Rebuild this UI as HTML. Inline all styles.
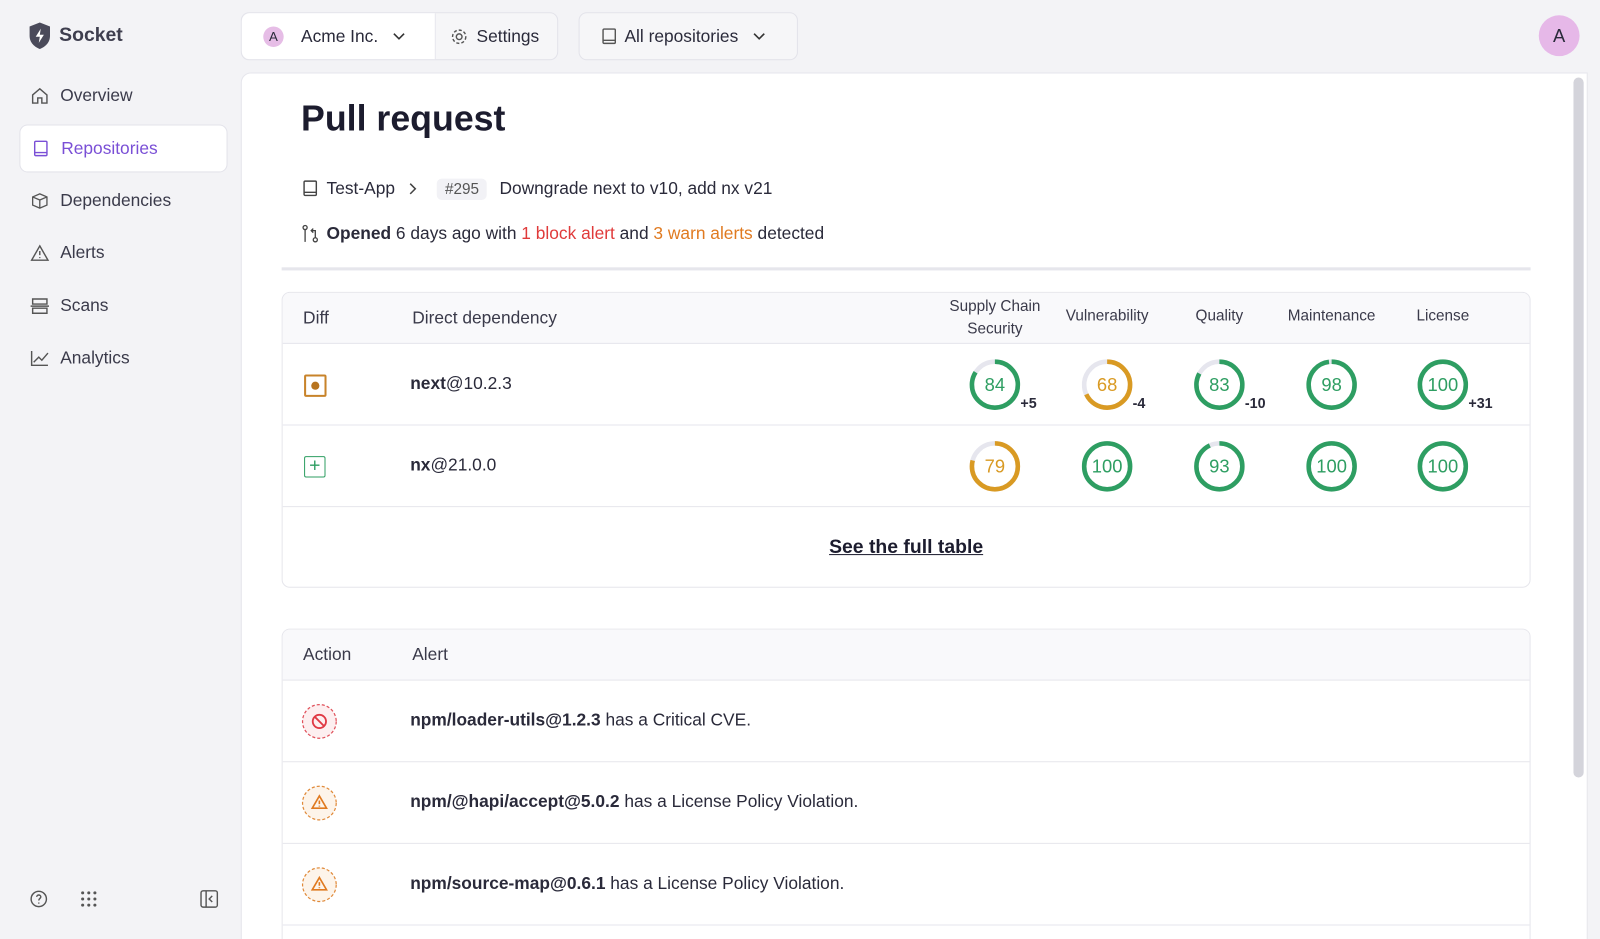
<!DOCTYPE html>
<html><head><meta charset="utf-8"><style>
*{box-sizing:border-box;margin:0;padding:0}
html,body{width:1600px;height:939px;overflow:hidden;background:#f3f3f6}
body{font-family:"Liberation Sans",sans-serif;color:#2a2a3a}
#w{width:1568px;height:920px;transform:scale(1.0204);transform-origin:0 0;position:relative}
.a{position:absolute}
.nav{position:absolute;left:19px;width:204px;height:47px;display:flex;align-items:center;padding-left:10px;font-size:17px;color:#3a3a4a}
.nav svg{margin-right:10px}
.btn{position:absolute;top:12px;height:47px;border:1px solid #e3e3ea;border-radius:8px;display:flex;align-items:center;font-size:17px;color:#2a2a3a}
.main{position:absolute;left:236px;top:71px;width:1320px;height:860px;background:#fff;border:1px solid #e6e6ec;border-radius:10px 0 0 0}
.tbl{position:absolute;left:39px;width:1224px;border:1px solid #e6e6ec;border-radius:8px;background:#fff;overflow:hidden}
.hd{height:50px;background:#f9f9fb;border-bottom:1px solid #e6e6ec;position:relative;font-size:16px;color:#3a3a4a}
.row{height:80px;border-bottom:1px solid #e6e6ec;position:relative;font-size:17px}
.ring{position:absolute;top:15px;width:50px;height:50px}
.ring span{position:absolute;left:0;top:0;width:50px;height:50px;line-height:50px;text-align:center;font-size:18px}
.d{position:absolute;font-size:14px;color:#2a2a3a;font-weight:bold}
.cent{position:absolute;text-align:center;width:110px}
</style></head><body><div id="w">
<svg class="a" style="left:28px;top:21px" width="22" height="28" viewBox="0 0 22 28"><path d="M11 1L21 5V14C21 21 16 25 11 27C6 25 1 21 1 14V5Z" fill="#4a4a5a"/><path d="M12 7L7 15H11L10 21L15 13H11Z" fill="#fff"/></svg>
<div class="a" style="left:58px;top:24px;font-size:19px;font-weight:bold;color:#3e3e4e">Socket</div>
<div class="btn" style="left:236px;width:311px;background:#f6f6f8">
 <div style="width:190px;height:45px;background:#fff;border-radius:8px 0 0 8px;border-right:1px solid #e3e3ea;display:flex;align-items:center;padding-left:21px">
  <span style="width:20px;height:20px;border-radius:50%;background:#e6bde6;font-size:13px;display:inline-flex;align-items:center;justify-content:center;margin-right:17px">A</span>Acme Inc.
  <svg style="margin-left:14px" width="12" height="8"><path d="M1 1L6 6L11 1" stroke="#333" stroke-width="1.6" fill="none"/></svg></div>
 <svg style="margin-left:14px;margin-right:8px" width="18" height="18" viewBox="0 0 18 18"><circle cx="9" cy="9" r="2.8" stroke="#555" fill="none" stroke-width="1.4"/><circle cx="9" cy="9" r="6.5" stroke="#555" fill="none" stroke-width="1.4" stroke-dasharray="3 2"/></svg>Settings
</div>
<div class="btn" style="left:567px;width:215px;background:#f6f6f8;padding-left:21px">
 <svg width="16" height="18" style="margin-right:7px"><rect x="2" y="1.5" width="12" height="14" rx="1" stroke="#555" fill="none" stroke-width="1.4"/><path d="M2 12.5H14" stroke="#555" stroke-width="1.3"/></svg>All repositories
 <svg style="margin-left:14px" width="12" height="8"><path d="M1 1L6 6L11 1" stroke="#333" stroke-width="1.6" fill="none"/></svg></div>
<div class="a" style="left:1508px;top:15px;width:40px;height:40px;border-radius:50%;background:#e6b8e8;font-size:18px;text-align:center;line-height:40px;color:#2a2a3a">A</div>
<div class="nav" style="top:70px"><svg width="20" height="18"><path d="M3 8L10 2L17 8V16H12V11H8V16H3Z" stroke="#555" fill="none" stroke-width="1.4"/></svg>Overview</div>
<div class="nav" style="top:122px;background:#fff;border:1px solid #e3e3ea;border-radius:8px;color:#7a4fd6"><svg width="20" height="18"><rect x="4" y="1.5" width="12" height="14" rx="1" stroke="#7a4fd6" fill="none" stroke-width="1.4"/><path d="M4 12.5H16" stroke="#7a4fd6" stroke-width="1.3"/></svg>Repositories</div>
<div class="nav" style="top:173px"><svg width="20" height="18"><path d="M3 5L10 2L17 5V13L10 16L3 13Z M3 5L10 8L17 5 M10 8V16" stroke="#555" fill="none" stroke-width="1.3"/></svg>Dependencies</div>
<div class="nav" style="top:224px"><svg width="20" height="18"><path d="M10 2L18 16H2Z M10 7V11 M10 13V14" stroke="#555" fill="none" stroke-width="1.4"/></svg>Alerts</div>
<div class="nav" style="top:276px"><svg width="20" height="18"><path d="M3 2H17V7H3Z M3 11H17V16H3Z M1 9H19" stroke="#555" fill="none" stroke-width="1.4"/></svg>Scans</div>
<div class="nav" style="top:327px"><svg width="20" height="18"><path d="M2 2V16H18 M4 13L9 8L12 11L18 4" stroke="#555" fill="none" stroke-width="1.4"/></svg>Analytics</div>
<svg class="a" style="left:29px;top:872px" width="18" height="18"><circle cx="9" cy="9" r="7.5" stroke="#555" fill="none" stroke-width="1.4"/><path d="M7 7C7 4.5 11 4.5 11 7C11 8.5 9 8.5 9 10.5M9 12.5V13.5" stroke="#555" fill="none" stroke-width="1.4"/></svg>
<svg class="a" style="left:79px;top:873px" width="16" height="16"><g fill="#555"><circle cx="2" cy="2" r="1.5"/><circle cx="8" cy="2" r="1.5"/><circle cx="14" cy="2" r="1.5"/><circle cx="2" cy="8" r="1.5"/><circle cx="8" cy="8" r="1.5"/><circle cx="14" cy="8" r="1.5"/><circle cx="2" cy="14" r="1.5"/><circle cx="8" cy="14" r="1.5"/><circle cx="14" cy="14" r="1.5"/></g></svg>
<svg class="a" style="left:196px;top:872px" width="18" height="18"><rect x="1" y="1" width="16" height="16" rx="2" stroke="#555" fill="none" stroke-width="1.4"/><path d="M6 1V17 M12 6L9 9L12 12" stroke="#555" fill="none" stroke-width="1.4"/></svg>
<div class="main">
 <div class="a" style="right:3px;top:4px;width:10px;height:686px;background:#d4d4db;border-radius:5px"></div>
 <div class="a" style="left:58px;top:25px;font-size:35px;font-weight:bold;color:#1c1c2e">Pull request</div>
 <div class="a" style="left:59px;top:102px;font-size:17px;display:flex;align-items:center;height:22px">
  <svg width="16" height="18" style="margin-right:8px"><rect x="2" y="1.5" width="12" height="14" rx="1" stroke="#444" fill="none" stroke-width="1.4"/><path d="M2 12.5H14" stroke="#444" stroke-width="1.3"/></svg>Test-App
  <svg width="10" height="12" style="margin:0 18px 0 13px"><path d="M2 1L7 6L2 11" stroke="#444" stroke-width="1.5" fill="none"/></svg>
  <span style="background:#f2f2f6;border-radius:5px;padding:2px 8px;font-size:15px;color:#555;margin-right:12px">#295</span>Downgrade next to v10, add nx v21</div>
 <div class="a" style="left:58px;top:147px;font-size:17px;display:flex;align-items:center">
  <svg width="20" height="18" style="margin-right:5px"><circle cx="4" cy="3" r="2" stroke="#444" fill="none" stroke-width="1.3"/><path d="M4 5V17" stroke="#444" stroke-width="1.3"/><circle cx="14" cy="15" r="2" stroke="#444" fill="none" stroke-width="1.3"/><path d="M14 13V6H10 M12 4L10 6L12 8" stroke="#444" fill="none" stroke-width="1.3"/></svg>
  <b>Opened</b>&nbsp;6 days ago with&nbsp;<span style="color:#e03a3a">1 block alert</span>&nbsp;and&nbsp;<span style="color:#e07a20">3 warn alerts</span>&nbsp;detected</div>
 <div class="a" style="left:39px;top:190px;width:1224px;height:3px;background:#e6e6ec"></div>
 <div class="tbl" style="top:214px;height:290px">
  <div class="hd">
   <div class="a" style="left:20px;top:15px;font-size:17px">Diff</div>
   <div class="a" style="left:127px;top:15px;font-size:17px">Direct dependency</div>
   <div class="cent" style="left:643px;top:3px;font-size:15px;line-height:22px">Supply Chain<br>Security</div>
   <div class="cent" style="left:753px;top:14px;font-size:15px">Vulnerability</div>
   <div class="cent" style="left:863px;top:14px;font-size:15px">Quality</div>
   <div class="cent" style="left:973px;top:14px;font-size:15px">Maintenance</div>
   <div class="cent" style="left:1082px;top:14px;font-size:15px">License</div>
  </div>
  <div class="row">
   <div class="a" style="left:21px;top:30px;width:22px;height:22px;border:2px solid #c8832a;border-radius:2px"><div style="position:absolute;left:5px;top:5px;width:8px;height:8px;border-radius:50%;background:#b8741f"></div></div>
   <div class="a" style="left:125px;top:29px"><b>next</b>@10.2.3</div>
  </div>
  <div class="row">
   <div class="a" style="left:21px;top:30px;width:21px;height:21px;border:1.5px solid #2e9e62;border-radius:2px;color:#2e9e62;text-align:center;line-height:17px;font-size:19px">+</div>
   <div class="a" style="left:125px;top:29px"><b>nx</b>@21.0.0</div>
  </div>
  <div style="height:79px;display:flex;align-items:center;justify-content:center;font-size:19px;font-weight:bold;text-decoration:underline;color:#1c1c2e">See the full table</div>
 </div>
 <div class="tbl" style="top:544px;height:330px">
  <div class="hd">
   <div class="a" style="left:20px;top:15px;font-size:17px">Action</div>
   <div class="a" style="left:127px;top:15px;font-size:17px">Alert</div>
  </div>
  <div class="row"><svg class="a" style="left:18px;top:22px" width="36" height="36"><circle cx="18" cy="18" r="16.5" fill="#fdeff0" stroke="#e0505a" stroke-dasharray="3 2" stroke-width="1.2"/><circle cx="18" cy="18" r="6.5" fill="none" stroke="#e03a45" stroke-width="1.8"/><path d="M13.5 13.5L22.5 22.5" stroke="#e03a45" stroke-width="1.8"/></svg>
   <div class="a" style="left:125px;top:29px"><b>npm/loader-utils@1.2.3</b> has a Critical CVE.</div></div>
  <div class="row"><svg class="a" style="left:18px;top:22px" width="36" height="36"><circle cx="18" cy="18" r="16.5" fill="#fdf4ea" stroke="#e08a3a" stroke-dasharray="3 2" stroke-width="1.2"/><path d="M18 11L25 23H11Z M18 15.5V19 M18 20.5V21.5" fill="none" stroke="#e07a20" stroke-width="1.6"/></svg>
   <div class="a" style="left:125px;top:29px"><b>npm/@hapi/accept@5.0.2</b> has a License Policy Violation.</div></div>
  <div class="row"><svg class="a" style="left:18px;top:22px" width="36" height="36"><circle cx="18" cy="18" r="16.5" fill="#fdf4ea" stroke="#e08a3a" stroke-dasharray="3 2" stroke-width="1.2"/><path d="M18 11L25 23H11Z M18 15.5V19 M18 20.5V21.5" fill="none" stroke="#e07a20" stroke-width="1.6"/></svg>
   <div class="a" style="left:125px;top:29px"><b>npm/source-map@0.6.1</b> has a License Policy Violation.</div></div>
 </div>
</div>
<script>
var cx=[974,1084,1194,1304,1413];
var data=[[[84,'+5'],[68,'-4'],[83,'-10'],[98,''],[100,'+31']],[[79,''],[100,''],[93,''],[100,''],[100,'']]];
var rows=document.querySelectorAll('.tbl')[0].querySelectorAll('.row');
data.forEach(function(r,i){r.forEach(function(c,j){
 var v=c[0],col=v<80?'#d99a23':'#2e9e62',C=2*Math.PI*22.5,left=cx[j]-236-39-1-25;
 var h='<div class="ring" style="left:'+left+'px"><svg width="50" height="50"><circle cx="25" cy="25" r="22.5" stroke="#e6e6ee" stroke-width="4.5" fill="none"/><circle cx="25" cy="25" r="22.5" stroke="'+col+'" stroke-width="4.5" fill="none" stroke-dasharray="'+(C*v/100)+' '+C+'" transform="rotate(-90 25 25)"/></svg><span style="color:'+col+'">'+v+'</span></div>';
 if(c[1])h+='<div class="d" style="left:'+(left+50)+'px;top:50px">'+c[1]+'</div>';
 rows[i].insertAdjacentHTML('beforeend',h);
});});
</script>
</div></body></html>
